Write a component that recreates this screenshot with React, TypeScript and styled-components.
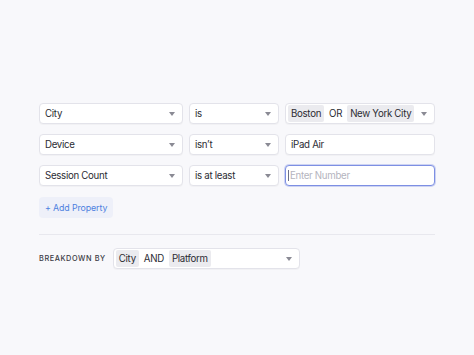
import React from "react";
import styled, { createGlobalStyle } from "styled-components";

const GlobalStyle = createGlobalStyle`
  html, body {
    margin: 0;
    padding: 0;
    background: #f8f8fb;
    font-family: Inter, "Noto Sans", sans-serif;
    color: #2b2b33;
  }
`;

const Page = styled.div`
  width: 474px;
  height: 355px;
  box-sizing: border-box;
  padding: 103px 39px 0 39px;
`;

const Filters = styled.div`
  display: grid;
  grid-template-columns: 144px 90px 150px;
  column-gap: 6px;
  row-gap: 10px;
  width: 396px;
`;

const Box = styled.div<{ $focused?: boolean }>`
  height: 21px;
  box-sizing: border-box;
  display: flex;
  align-items: center;
  gap: 4px;
  padding: 0 2px 0 5px;
  background: #ffffff;
  border: 1px solid ${(p) => (p.$focused ? "#7d8fe3" : "#e3e3ea")};
  box-shadow: ${(p) =>
    p.$focused ? "0 0 0 1px rgba(125,143,227,0.35)" : "0 1px 1px rgba(0,0,0,0.03)"};
  border-radius: 4px;
  font-size: 9.7px;
  letter-spacing: -0.3px;
  white-space: nowrap;
`;

const Label = styled.span`
  flex: 1;
`;

const Placeholder = styled.span`
  flex: 1;
  color: #b4b4be;
  border-left: 1px solid #6a6f86;
  padding-left: 1px;
  margin-left: -3px;
`;

const Tag = styled.span`
  background: #ebebef;
  border-radius: 2px;
  padding: 2px 3px;
  line-height: 13px;
`;

const TagRow = styled.div`
  flex: 1;
  display: flex;
  align-items: center;
  gap: 5px;
  margin-left: -3px;
`;

const Caret = styled.span`
  width: 0;
  height: 0;
  margin: 0 5px 0 0;
  border-left: 3px solid transparent;
  border-right: 3px solid transparent;
  border-top: 4px solid #8a8a94;
`;

const AddButton = styled.button`
  margin-top: 11px;
  height: 21px;
  padding: 0 6px;
  border: none;
  border-radius: 4px;
  background: #eef0f9;
  color: #4c7fe0;
  font-family: Inter, "Noto Sans", sans-serif;
  font-size: 8.8px;
  letter-spacing: -0.1px;
`;

const Divider = styled.hr`
  margin: 16px 0 0 0;
  border: none;
  border-top: 1px solid #e8e8ee;
  width: 396px;
`;

const BreakdownRow = styled.div`
  display: flex;
  align-items: center;
  gap: 7px;
  margin-top: 13px;
`;

const BreakdownLabel = styled.span`
  font-size: 7.3px;
  letter-spacing: 0.6px;
  font-weight: 500;
  color: #3a3a44;
`;

const BreakdownBox = styled(Box)`
  width: 187px;
`;

const Select = ({ children }: { children: React.ReactNode }) => (
  <Box>
    <Label>{children}</Label>
    <Caret />
  </Box>
);

export default function App() {
  return (
    <Page>
      <GlobalStyle />
      <Filters>
        <Select>City</Select>
        <Select>is</Select>
        <Box>
          <TagRow>
            <Tag>Boston</Tag>
            <span>OR</span>
            <Tag>New York City</Tag>
          </TagRow>
          <Caret />
        </Box>

        <Select>Device</Select>
        <Select>isn’t</Select>
        <Box>
          <Label>iPad Air</Label>
        </Box>

        <Select>Session Count</Select>
        <Select>is at least</Select>
        <Box $focused>
          <Placeholder>Enter Number</Placeholder>
        </Box>
      </Filters>

      <AddButton>+ Add Property</AddButton>

      <Divider />

      <BreakdownRow>
        <BreakdownLabel>BREAKDOWN BY</BreakdownLabel>
        <BreakdownBox>
          <TagRow>
            <Tag>City</Tag>
            <span>AND</span>
            <Tag>Platform</Tag>
          </TagRow>
          <Caret />
        </BreakdownBox>
      </BreakdownRow>
    </Page>
  );
}
